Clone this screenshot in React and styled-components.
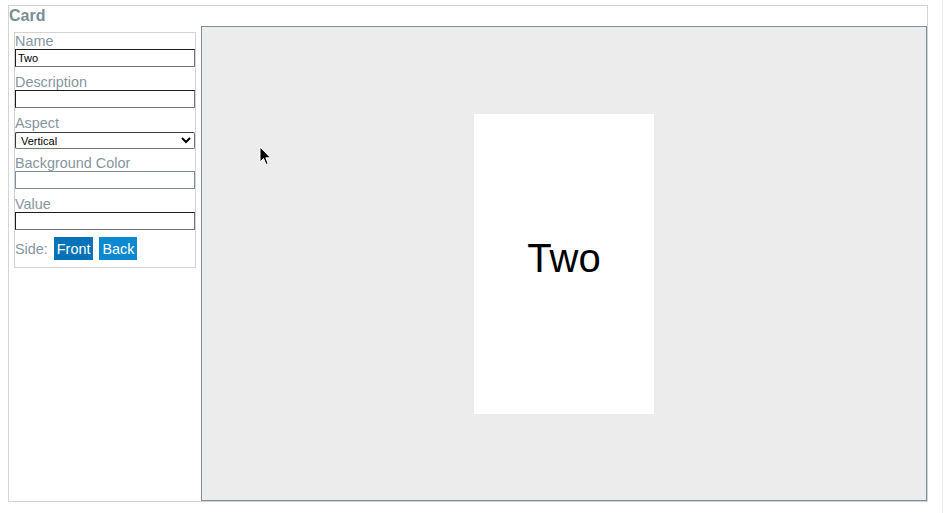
import styled, { createGlobalStyle } from "styled-components";

const GlobalStyle = createGlobalStyle`
  html, body {
    margin: 0;
    padding: 0;
    background: #fff;
  }
  body {
    font-family: "Liberation Sans", Arial, sans-serif;
  }
`;

const Page = styled.div`
  position: relative;
  box-sizing: border-box;
  min-height: 100vh;
  padding: 5px 15px 0 8px;
  border-right: 1px solid #ececec;
`;

const Panel = styled.div`
  box-sizing: border-box;
  width: 920px;
  height: 497px;
  border: 1px solid #d4d4d4;
  display: flex;
  flex-direction: column;
`;

const Title = styled.div`
  height: 20px;
  line-height: 20px;
  font-size: 16px;
  font-weight: bold;
  color: #7d8d96;
`;

const Body = styled.div`
  flex: 1;
  display: flex;
  align-items: flex-start;
`;

const Form = styled.div`
  box-sizing: border-box;
  width: 182px;
  margin: 6px 5px 0 5px;
  border: 1px solid #d2d2d2;
  padding-bottom: 7px;
`;

const Field = styled.div`
  margin-bottom: 7px;
`;

const Label = styled.label`
  display: block;
  font-size: 14.4px;
  line-height: 16px;
  color: #8696a0;
`;

const Input = styled.input`
  display: block;
  box-sizing: border-box;
  width: 100%;
  height: 18px;
  margin: 0;
  padding: 1px 2px;
  font-family: "Liberation Sans", Arial, sans-serif;
  font-size: 11px;
  color: #000;
  background: #fff;
  border: 1px solid;
  border-color: ${(p) => (p.$soft ? "#7f8f98" : "#1c1c1c #767676 #767676 #1c1c1c")};
  outline: none;
`;

const Select = styled.select`
  display: block;
  box-sizing: border-box;
  width: 100%;
  height: 17px;
  margin: 1px 0 -1px;
  padding: 0 0 0 1px;
  font-family: "Liberation Sans", Arial, sans-serif;
  font-size: 11px;
  color: #000;
  background: #fff;
  border: 1px solid;
  border-color: #3a3a3a #767676 #767676 #3a3a3a;
  border-radius: 2px;
`;

const SideRow = styled.div`
  display: flex;
  align-items: center;
  gap: 6px;
  font-size: 14.4px;
  color: #8696a0;
`;

const SideButton = styled.button`
  height: 23px;
  padding: 0 3px;
  border: none;
  font-family: "Liberation Sans", Arial, sans-serif;
  font-size: 14.4px;
  color: #fff;
  background: ${(p) => (p.$active ? "#0672b8" : "#0a88d0")};
  cursor: pointer;
`;

const Canvas = styled.div`
  box-sizing: border-box;
  flex: 1;
  height: 475px;
  background: #ececec;
  border: 1px solid #7b8f99;
  display: flex;
  align-items: center;
  justify-content: center;
`;

const CardFace = styled.div`
  box-sizing: border-box;
  width: 180px;
  height: 300px;
  padding-bottom: 10px;
  background: #fff;
  display: flex;
  align-items: center;
  justify-content: center;
  font-size: 40px;
  color: #000;
`;

const Pointer = styled.svg`
  position: absolute;
  left: 259px;
  top: 146px;
  pointer-events: none;
`;

export default function App() {
  return (
    <Page>
      <GlobalStyle />
      <Panel>
        <Title>Card</Title>
        <Body>
          <Form>
            <Field>
              <Label>Name</Label>
              <Input defaultValue="Two" />
            </Field>
            <Field>
              <Label>Description</Label>
              <Input />
            </Field>
            <Field>
              <Label>Aspect</Label>
              <Select defaultValue="Vertical">
                <option>Vertical</option>
                <option>Horizontal</option>
              </Select>
            </Field>
            <Field>
              <Label>Background Color</Label>
              <Input $soft />
            </Field>
            <Field>
              <Label>Value</Label>
              <Input />
            </Field>
            <SideRow>
              <span>Side:</span>
              <SideButton $active>Front</SideButton>
              <SideButton>Back</SideButton>
            </SideRow>
          </Form>
          <Canvas>
            <CardFace>Two</CardFace>
          </Canvas>
        </Body>
      </Panel>
      <Pointer width="13" height="20" viewBox="0 0 13 20">
        <path d="M1 1 L1 16 L4.5 12.5 L7 18.5 L9.2 17.6 L6.8 11.8 L11.5 11.8 Z" fill="#000" stroke="#fff" strokeWidth="1" />
      </Pointer>
    </Page>
  );
}
